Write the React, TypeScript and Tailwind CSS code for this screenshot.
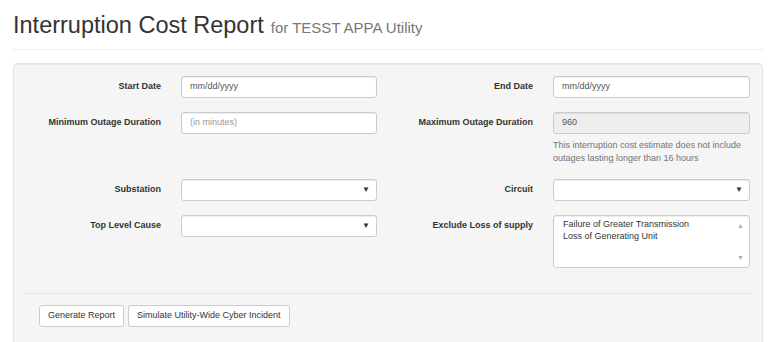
const LABEL = "flex h-[22px] items-center justify-end text-right text-[9px] font-bold text-[#333]";
const FIELD =
  "flex h-[22px] items-center rounded-[3px] border border-[#ccc] px-[8px] text-[9px] shadow-[inset_0_1px_1px_rgba(0,0,0,0.075)]";

function Select() {
  return (
    <div className={`${FIELD} justify-end bg-white pr-[6px]`}>
      <span className="text-[8px] leading-none text-[#333]">▼</span>
    </div>
  );
}

export default function App() {
  return (
    <div className="min-h-screen bg-white font-['Liberation_Sans',Arial,sans-serif] text-[#333]">
      <div className="mx-[13px] w-[750px]">
        {/* Page header */}
        <div className="mt-[14px] border-b border-[#eee] pb-[13px]">
          <h1 className="flex h-[22px] items-baseline gap-[7px] whitespace-nowrap text-[23.5px] leading-[22px] font-normal text-[#333]">
            <span>Interruption Cost Report</span>
            <small className="text-[15px] leading-[22px] text-[#777]">for TESST APPA Utility</small>
          </h1>
        </div>

        {/* Well */}
        <div className="mt-[13px] rounded-[4px] border border-[#e3e3e3] bg-[#f5f5f5] pt-[12px] pb-[20px] pl-[9px] pr-[10px] shadow-[inset_0_1px_1px_rgba(0,0,0,0.05)]">
          <div className="grid grid-cols-[138px_196px_136px_197px] items-start gap-x-[20px] gap-y-[14px]">
            {/* Row 1 */}
            <div className={LABEL}>Start Date</div>
            <div className={`${FIELD} bg-white text-[#555]`}>mm/dd/yyyy</div>
            <div className={LABEL}>End Date</div>
            <div className={`${FIELD} bg-white text-[#555]`}>mm/dd/yyyy</div>

            {/* Row 2 */}
            <div className={LABEL}>Minimum Outage Duration</div>
            <div className={`${FIELD} bg-white text-[#999]`}>(in minutes)</div>
            <div className={LABEL}>Maximum Outage Duration</div>
            <div>
              <div className={`${FIELD} bg-[#eee] text-[#555]`}>960</div>
              <p className="mt-[5px] text-[9px] leading-[13px] text-[#737373]">
                This interruption cost estimate does not include
                <br />
                outages lasting longer than 16 hours
              </p>
            </div>

            {/* Row 3 */}
            <div className={LABEL}>Substation</div>
            <Select />
            <div className={LABEL}>Circuit</div>
            <Select />

            {/* Row 4 */}
            <div className={LABEL}>Top Level Cause</div>
            <Select />
            <div className={LABEL}>Exclude Loss of supply</div>
            <div className="relative h-[53px] rounded-[3px] border border-[#ccc] bg-white shadow-[inset_0_1px_1px_rgba(0,0,0,0.075)]">
              <div className="pl-[9px] pt-[2px] text-[9px] leading-[12px] text-[#333]">
                <div>Failure of Greater Transmission</div>
                <div>Loss of Generating Unit</div>
              </div>
              {/* scrollbar arrows */}
              <span className="absolute right-[5px] top-[6px] text-[7px] leading-none text-[#b0b0b0]">▲</span>
              <span className="absolute right-[5px] bottom-[6px] text-[7px] leading-none text-[#b0b0b0]">▼</span>
            </div>
          </div>

          <div className="mt-[25px] -ml-[1px] border-t border-[#e5e5e5]" />

          <div className="mt-[11px] flex gap-[4px] pl-[16px]">
            <button className="h-[22px] rounded-[3px] border border-[#ccc] bg-white px-[8px] text-[9px] text-[#333]">
              Generate Report
            </button>
            <button className="h-[22px] rounded-[3px] border border-[#ccc] bg-white px-[8px] text-[9px] text-[#333]">
              Simulate Utility-Wide Cyber Incident
            </button>
          </div>
        </div>
      </div>
    </div>
  );
}
